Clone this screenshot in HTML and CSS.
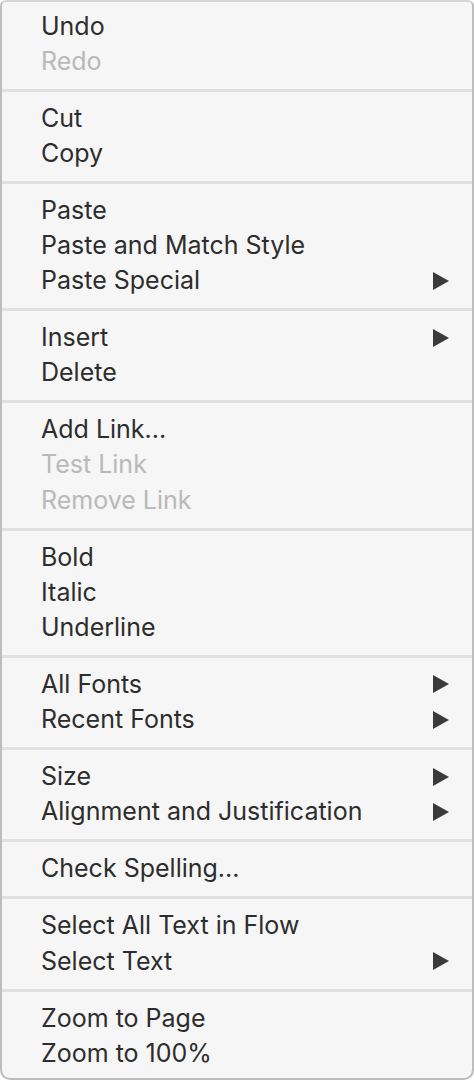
FILE: index.html
```html
<!DOCTYPE html>
<html>
<head>
<meta charset="utf-8">
<link rel="stylesheet" href="styles.css">
</head>
<body>
<div class="menu">
  <div class="group">
    <div class="item">Undo</div>
    <div class="item disabled">Redo</div>
  </div>
  <div class="sep"></div>
  <div class="group">
    <div class="item">Cut</div>
    <div class="item">Copy</div>
  </div>
  <div class="sep"></div>
  <div class="group">
    <div class="item">Paste</div>
    <div class="item">Paste and Match Style</div>
    <div class="item sub">Paste Special<span class="arrow"></span></div>
  </div>
  <div class="sep"></div>
  <div class="group">
    <div class="item sub">Insert<span class="arrow"></span></div>
    <div class="item">Delete</div>
  </div>
  <div class="sep"></div>
  <div class="group">
    <div class="item">Add Link...</div>
    <div class="item disabled">Test Link</div>
    <div class="item disabled">Remove Link</div>
  </div>
  <div class="sep"></div>
  <div class="group">
    <div class="item">Bold</div>
    <div class="item">Italic</div>
    <div class="item">Underline</div>
  </div>
  <div class="sep"></div>
  <div class="group">
    <div class="item sub">All Fonts<span class="arrow"></span></div>
    <div class="item sub">Recent Fonts<span class="arrow"></span></div>
  </div>
  <div class="sep"></div>
  <div class="group">
    <div class="item sub">Size<span class="arrow"></span></div>
    <div class="item sub">Alignment and Justification<span class="arrow"></span></div>
  </div>
  <div class="sep"></div>
  <div class="group">
    <div class="item">Check Spelling...</div>
  </div>
  <div class="sep"></div>
  <div class="group">
    <div class="item">Select All Text in Flow</div>
    <div class="item sub">Select Text<span class="arrow"></span></div>
  </div>
  <div class="sep"></div>
  <div class="group">
    <div class="item">Zoom to Page</div>
    <div class="item">Zoom to 100%</div>
  </div>
</div>
</body>
</html>
```
FILE: styles.css
```css
html, body {
  margin: 0;
  padding: 0;
  background: #ffffff;
}
.menu {
  box-sizing: border-box;
  width: 474px;
  height: 1080px;
  background: #f6f6f6;
  border: 2px solid #bdbdbd;
  border-top-color: #d6d6d6;
  border-radius: 6px 6px 10px 10px;
  padding-top: 6.5px;
  display: flex;
  flex-direction: column;
  font-family: Inter, "Noto Sans", sans-serif;
  font-size: 25px;
  color: #2d2d2d;
  overflow: hidden;
}
.group {
  display: flex;
  flex-direction: column;
}
.item {
  height: 35.1px;
  line-height: 35px;
  padding-left: 39px;
  padding-right: 23px;
  display: flex;
  align-items: center;
  justify-content: space-between;
  white-space: nowrap;
}
.item.disabled {
  color: #b9b9b9;
}
.arrow {
  width: 0;
  height: 0;
  border-top: 9px solid transparent;
  border-bottom: 9px solid transparent;
  border-left: 16px solid #3a3a3a;
}
.sep {
  height: 3px;
  margin: 10px 0 9px;
  background: #e1e1e1;
}
```
